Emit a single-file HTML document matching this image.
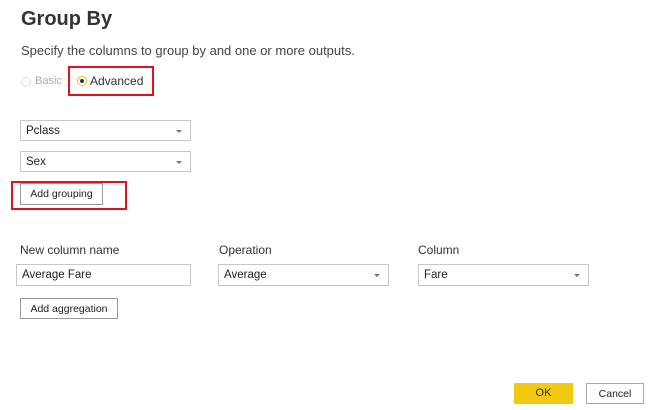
<!DOCTYPE html>
<html><head><style>
body{margin:0;width:650px;height:410px;background:#fff;font-family:"Liberation Sans",sans-serif;color:#333;position:relative;overflow:hidden}
.a{position:absolute}
.sel{position:absolute;border:1px solid #c8c8c8;box-sizing:border-box;font-size:11.5px;padding-left:5px;color:#222;background:#fff;display:flex;align-items:center}
.sel .ar{position:absolute;right:8px;top:50%;margin-top:-1px;width:0;height:0;border-left:3px solid transparent;border-right:3px solid transparent;border-top:3px solid #777}
.btn{position:absolute;border:1px solid #999;box-sizing:border-box;font-size:10.5px;background:#fff;color:#222;display:flex;align-items:center;justify-content:center}
.red{position:absolute;border:2px solid #e0121f;box-sizing:border-box}
.lbl{position:absolute;font-size:12px;color:#333}
</style></head><body>
<div class="a" style="left:21px;top:8px;font-size:20px;font-weight:bold;color:#333">Group By</div>
<div class="a" style="left:21px;top:43px;font-size:13px;color:#444">Specify the columns to group by and one or more outputs.</div>
<div class="a" style="left:21px;top:77px;width:8px;height:8px;border:1px solid #ddd;border-radius:50%"></div>
<div class="a" style="left:35px;top:75px;font-size:11px;color:#aaa">Basic</div>
<div class="a" style="left:77px;top:76px;width:8px;height:8px;border:1px solid #f0c020;border-radius:50%"></div>
<div class="a" style="left:80px;top:79px;width:4px;height:4px;background:#333;border-radius:50%"></div>
<div class="a" style="left:90px;top:74px;font-size:12px;color:#333">Advanced</div>
<div class="red" style="left:68px;top:66px;width:86px;height:30px"></div>
<div class="sel" style="left:20px;top:120px;width:171px;height:21px">Pclass<span class="ar"></span></div>
<div class="sel" style="left:20px;top:151px;width:171px;height:21px">Sex<span class="ar"></span></div>
<div class="btn" style="left:20px;top:183px;width:83px;height:22px">Add grouping</div>
<div class="red" style="left:11px;top:181px;width:116px;height:29px"></div>
<div class="lbl" style="left:20px;top:243px">New column name</div>
<div class="lbl" style="left:219px;top:243px">Operation</div>
<div class="lbl" style="left:418px;top:243px">Column</div>
<div class="sel" style="left:16px;top:264px;width:175px;height:22px">Average Fare</div>
<div class="sel" style="left:218px;top:264px;width:171px;height:22px">Average<span class="ar"></span></div>
<div class="sel" style="left:418px;top:264px;width:171px;height:22px">Fare<span class="ar"></span></div>
<div class="btn" style="left:20px;top:298px;width:98px;height:21px">Add aggregation</div>
<div class="a" style="left:514px;top:383px;width:59px;height:21px;background:#f2c811;font-size:11px;text-align:center;line-height:21px;color:#333">OK</div>
<div class="btn" style="left:586px;top:383px;width:58px;height:21px;border-color:#aaa">Cancel</div>
</body></html>
